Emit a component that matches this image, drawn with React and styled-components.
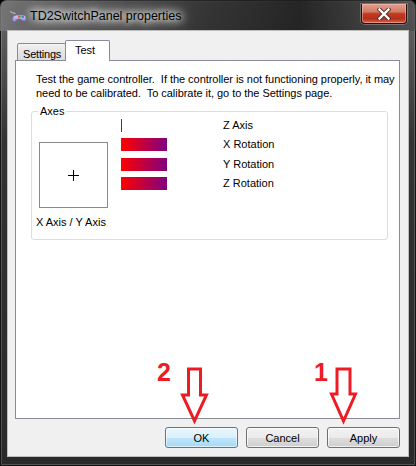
import styled, { createGlobalStyle } from 'styled-components';

const GlobalStyle = createGlobalStyle`
  html, body {
    margin: 0;
    padding: 0;
    background: #000;
  }
  body {
    font-family: 'Liberation Sans', Arial, sans-serif;
    font-size: 11px;
    color: #000;
  }
`;

const Window = styled.div`
  position: relative;
  width: 416px;
  height: 466px;
  box-sizing: border-box;
  border-radius: 7px 7px 0 0;
  background: linear-gradient(to bottom, #6c6c6c 0, #5a5a5a 40px, #333 140px, #2a2a2a 100%);
  box-shadow: inset 0 0 0 1px #141414, inset 0 0 0 2px rgba(255, 255, 255, 0.18);
  display: flex;
  flex-direction: column;
  overflow: hidden;
`;

const TitleBar = styled.div`
  height: 31px;
  display: flex;
  align-items: flex-start;
  padding: 0 9px 0 9px;
  background: linear-gradient(to right, rgba(120, 120, 120, 0.85) 0%, rgba(90, 90, 90, 0.6) 10%, rgba(40, 40, 40, 0.8) 50%, rgba(30, 30, 30, 0.9) 72%, rgba(70, 70, 70, 0.6) 100%);
  border-radius: 7px 7px 0 0;
`;

const AppIcon = styled.svg`
  width: 18px;
  height: 16px;
  margin-top: 10px;
  flex: none;
`;

const Title = styled.span`
  margin: 9px 0 0 3px;
  font-family: 'Liberation Sans', Arial, sans-serif;
  font-size: 12.5px;
  line-height: 14px;
  color: #000;
  text-shadow: 0 0 6px #fff, 0 0 10px #fff, 0 0 14px rgba(255, 255, 255, 0.9), 0 0 18px rgba(255, 255, 255, 0.7);
  flex: 1;
`;

const CloseButton = styled.div`
  width: 46px;
  height: 20px;
  margin-top: 4px;
  box-sizing: border-box;
  border: 1px solid #2b0c08;
  border-top: none;
  border-radius: 0 0 4px 4px;
  background: linear-gradient(to bottom, #e2a090 0%, #d27b66 40%, #bf3a1f 52%, #b5301a 78%, #d8664a 100%);
  box-shadow: inset 0 0 0 1px rgba(255, 200, 190, 0.45), 0 0 0 1px rgba(255, 255, 255, 0.25);
  display: flex;
  align-items: center;
  justify-content: center;
`;

const Client = styled.div`
  margin: 0 8px 10px 8px;
  height: 425px;
  box-sizing: border-box;
  background: #f0f0f0;
  box-shadow: 0 0 0 1px #bdbdbd;
  display: flex;
  flex-direction: column;
`;

const Tabs = styled.div`
  display: flex;
  align-items: flex-end;
  padding: 9px 0 0 9px;
  margin-bottom: -1px;
  position: relative;
  z-index: 1;
`;

const Tab = styled.div`
  box-sizing: border-box;
  height: ${(p) => (p.$active ? '21px' : '18px')};
  width: ${(p) => p.$w}px;
  margin-left: ${(p) => (p.$active ? '-1px' : '0')};
  padding: ${(p) => (p.$active ? '3px 0 0 9px' : '4px 0 0 5px')};
  border: 1px solid #898c95;
  border-bottom: ${(p) => (p.$active ? 'none' : '1px solid #898c95')};
  border-radius: 2px 2px 0 0;
  background: ${(p) => (p.$active ? '#fff' : 'linear-gradient(to bottom, #f3f3f3, #e4e4e4 50%, #dcdcdc)')};
  line-height: 13px;
  font-size: 11px;
  letter-spacing: ${(p) => (p.$active ? '0' : '-0.2px')};
  white-space: nowrap;
`;

const Panel = styled.div`
  margin-left: 7px;
  width: 385px;
  height: 359px;
  box-sizing: border-box;
  border: 1px solid #898c95;
  background: #fff;
  padding: 11px 11px 0 20px;
`;

const Description = styled.p`
  margin: 0;
  white-space: pre;
  line-height: 14px;
  letter-spacing: -0.04px;
`;

const GroupBox = styled.fieldset`
  margin: 4px 0 0 -5px;
  padding: 0;
  border: 1px solid #d5dfe5;
  border-radius: 3px;
  display: flex;
  min-inline-size: 0;
`;

const Legend = styled.legend`
  margin-left: 6px;
  padding: 0 2px;
  line-height: 14px;
`;

const XYColumn = styled.div`
  width: 89px;
  box-sizing: border-box;
  padding: 24px 0 10px 4px;
  flex: none;
`;

const XYBox = styled.div`
  width: 69px;
  height: 66px;
  margin-left: 3px;
  box-sizing: border-box;
  border: 1px solid #8a8a8a;
  display: flex;
  align-items: center;
  justify-content: center;
`;

const XYLabel = styled.div`
  margin-top: 7px;
  line-height: 14px;
`;

const AxesGrid = styled.div`
  display: grid;
  grid-template-columns: 102px auto;
  grid-auto-rows: 13px;
  row-gap: 6.33px;
  align-items: center;
  padding-top: 1px;
`;

const Bar = styled.div`
  height: 13px;
  width: ${(p) => p.$w}px;
  background: linear-gradient(to right, #ff0000, #800080);
`;

const AxisLabel = styled.span`
  line-height: 13px;
`;

const ButtonRow = styled.div`
  display: flex;
  justify-content: flex-end;
  gap: 8px;
  margin-top: 8px;
  padding-right: 8px;
`;

const Button = styled.button`
  width: 73px;
  height: 21px;
  box-sizing: border-box;
  padding: 0;
  font-family: 'Liberation Sans', Arial, sans-serif;
  font-size: 11px;
  color: #000;
  border-radius: 3px;
  border: 1px solid ${(p) => (p.$default ? '#3c7fb1' : '#707070')};
  background: ${(p) =>
    p.$default
      ? 'linear-gradient(to bottom, #eaf6fd 0%, #d9f0fc 50%, #bee6fd 51%, #a7d9f5 100%)'
      : 'linear-gradient(to bottom, #f2f2f2 0%, #ebebeb 50%, #dddddd 51%, #cfcfcf 100%)'};
  box-shadow: inset 0 0 0 1px ${(p) => (p.$default ? 'rgba(255,255,255,0.6)' : 'rgba(255,255,255,0.7)')};
`;

const Overlay = styled.svg`
  position: absolute;
  left: 0;
  top: 0;
  pointer-events: none;
`;

const Step = styled.span`
  position: absolute;
  left: ${(p) => p.$x}px;
  top: ${(p) => p.$y}px;
  font-family: 'Liberation Sans', Arial, sans-serif;
  font-weight: bold;
  font-size: 25px;
  line-height: 1;
  color: #ed1c24;
`;

const axes = [
  { label: 'Z Axis', w: 1 },
  { label: 'X Rotation', w: 46 },
  { label: 'Y Rotation', w: 46 },
  { label: 'Z Rotation', w: 46 },
];

const App = () => {
  return (
    <>
      <GlobalStyle />
      <Window>
        <TitleBar>
          <AppIcon viewBox='0 0 18 16'>
            <defs>
              <linearGradient id='pad' x1='0' y1='0' x2='0' y2='1'>
                <stop offset='0%' stopColor='#d9d4f5' />
                <stop offset='100%' stopColor='#8a7fd0' />
              </linearGradient>
            </defs>
            <path d='M1 2 C2 1 3 3 4 3 S6 3 6 4' fill='none' stroke='#b8b8c8' strokeWidth='1.2' />
            <path d='M4 7 C5 5 9 5 12 5 C15 5 17 6 17 8 C17 10 16 11 15 11 C13 11 13 9 10 9 C7 9 7 12 5 12 C3 12 3 9 4 7 Z' fill='url(#pad)' stroke='#6b63a8' strokeWidth='0.6' />
            <rect x='9' y='5.5' width='2' height='2' fill='#e84a4a' />
            <rect x='11' y='5.5' width='2' height='2' fill='#4ac24a' />
            <rect x='13' y='6' width='2' height='2' fill='#4a7ae8' />
          </AppIcon>
          <Title>TD2SwitchPanel properties</Title>
          <CloseButton>
            <svg width='14' height='12' viewBox='0 0 14 12'>
              <path d='M2.5 1.5 L11.5 10.5 M11.5 1.5 L2.5 10.5' stroke='#4a2a26' strokeWidth='4' strokeLinecap='square' />
              <path d='M2.5 1.5 L11.5 10.5 M11.5 1.5 L2.5 10.5' stroke='#fff' strokeWidth='2.4' strokeLinecap='square' />
            </svg>
          </CloseButton>
        </TitleBar>
        <Client>
          <Tabs>
            <Tab $w={49}>Settings</Tab>
            <Tab $w={45} $active>Test</Tab>
          </Tabs>
          <Panel>
            <Description>
              {'Test the game controller.  If the controller is not functioning properly, it may\nneed to be calibrated.  To calibrate it, go to the Settings page.'}
            </Description>
            <GroupBox>
              <Legend>Axes</Legend>
              <XYColumn>
                <XYBox>
                  <svg width='11' height='11' viewBox='0 0 11 11'>
                    <path d='M5.5 0 V11 M0 5.5 H11' stroke='#000' strokeWidth='1' />
                  </svg>
                </XYBox>
                <XYLabel>X Axis / Y Axis</XYLabel>
              </XYColumn>
              <AxesGrid>
                {axes.map(({ label, w }) => [
                  <Bar key={label + '-bar'} $w={w} />,
                  <AxisLabel key={label}>{label}</AxisLabel>,
                ])}
              </AxesGrid>
            </GroupBox>
          </Panel>
          <ButtonRow>
            <Button $default>OK</Button>
            <Button>Cancel</Button>
            <Button>Apply</Button>
          </ButtonRow>
        </Client>
        <Overlay width='416' height='466'>
          <path d='M188.5 369 H200.5 V395 H206.5 L194.5 421 L182.5 395 H188.5 Z' fill='none' stroke='#ed1c24' strokeWidth='3' />
          <path d='M337 369 H350 V394 H355.5 L343.5 421 L331.5 394 H337 Z' fill='none' stroke='#ed1c24' strokeWidth='3' />
        </Overlay>
        <Step $x={157} $y={360}>2</Step>
        <Step $x={314} $y={360}>1</Step>
      </Window>
    </>
  );
};

export default App;
